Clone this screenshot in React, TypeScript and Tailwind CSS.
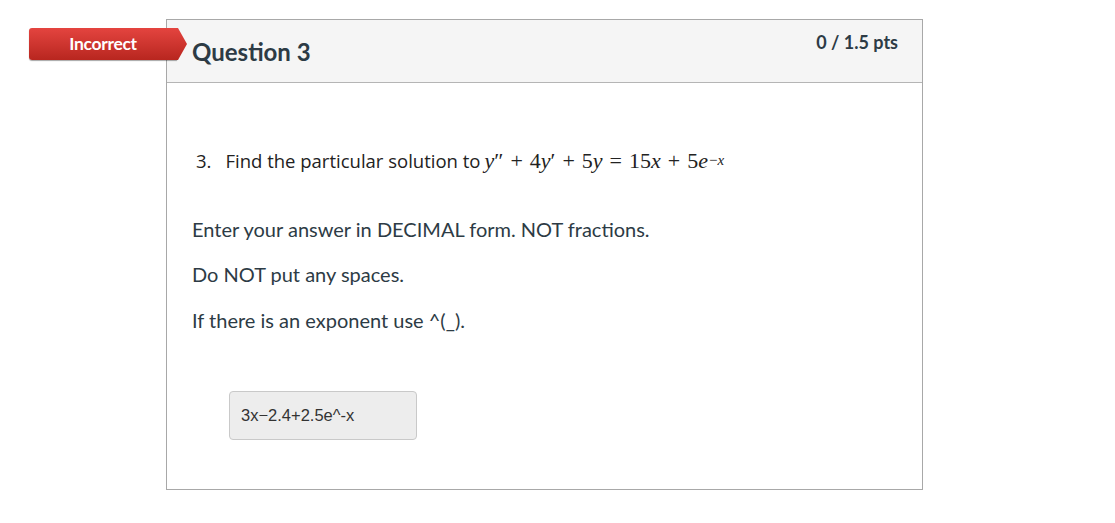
import React from "react";

const Badge: React.FC = () => (
  <div className="absolute left-[-138px] top-[8px] flex h-[32px] items-center">
    <div className="flex h-full w-[148px] items-center justify-center rounded-l-[3px] bg-gradient-to-b from-[#e4443f] to-[#b8261f] shadow-[0_1px_1px_rgba(0,0,0,0.35)]">
      <span className="text-[17.5px] font-bold tracking-[-0.3px] text-white [font-family:Lato,sans-serif]">
        Incorrect
      </span>
    </div>
    <svg width="10" height="32" viewBox="0 0 10 32" className="block">
      <defs>
        <linearGradient id="g" x1="0" y1="0" x2="0" y2="1">
          <stop offset="0" stopColor="#e4443f" />
          <stop offset="1" stopColor="#b8261f" />
        </linearGradient>
      </defs>
      <polygon points="0,0 1,0 10,16 1,32 0,32" fill="url(#g)" />
    </svg>
  </div>
);

const Op: React.FC<{ children: React.ReactNode }> = ({ children }) => (
  <span className="mx-[7px]">{children}</span>
);

const Equation: React.FC = () => (
  <span className="ml-[4px] text-[22px] text-[#222] [font-family:'Liberation_Serif',serif]">
    <i>y</i>″<Op>+</Op>4<i>y</i>′<Op>+</Op>5<i>y</i>
    <Op>=</Op>15<i>x</i>
    <Op>+</Op>5<i>e</i>
    <sup className="relative top-[-3px] ml-[1px] text-[15px]">
      −<i>x</i>
    </sup>
  </span>
);

export default function App() {
  return (
    <div className="min-h-screen bg-white pl-[166px] pt-[19px] [font-family:Lato,sans-serif]">
      <div className="relative w-[757px] border border-[#a8a8a8]">
        <Badge />
        <div className="flex h-[63px] items-start justify-between border-b border-[#b5b5b5] bg-[#f5f5f5] pl-[25px] pr-[24px]">
          <h2 className="mt-[17px] text-[24px] font-bold leading-[30px] text-[#2d3b45]">
            Question 3
          </h2>
          <span className="mt-[10px] text-[18px] font-bold leading-[24px] text-[#2d3b45]">
            0 / 1.5 pts
          </span>
        </div>
        <div className="pb-[49px] pl-[25px]">
          <p className="mt-[64px] ml-[4px] flex items-baseline text-[18.5px] font-medium leading-[28px] text-[#222] [font-family:'Open_Sans',sans-serif]">
            <span className="mr-[14px]">3.</span>
            <span>Find the particular solution to</span>
            <Equation />
          </p>
          <p className="mt-[39px] text-[20px] leading-[30px] text-[#2d3b45]">
            Enter your answer in DECIMAL form. NOT fractions.
          </p>
          <p className="mt-[15px] text-[20px] leading-[30px] text-[#2d3b45]">
            Do NOT put any spaces.
          </p>
          <p className="mt-[16px] text-[20px] leading-[30px] text-[#2d3b45]">
            If there is an exponent use ^(_).
          </p>
          <div className="ml-[37px] mt-[56px] flex h-[49px] w-[188px] items-center rounded-[4px] border border-[#c9c9c9] bg-[#ededed] px-[11px] text-[16.5px] text-[#333] [font-family:'Liberation_Sans',sans-serif]">
            3x−2.4+2.5e^-x
          </div>
        </div>
      </div>
    </div>
  );
}
